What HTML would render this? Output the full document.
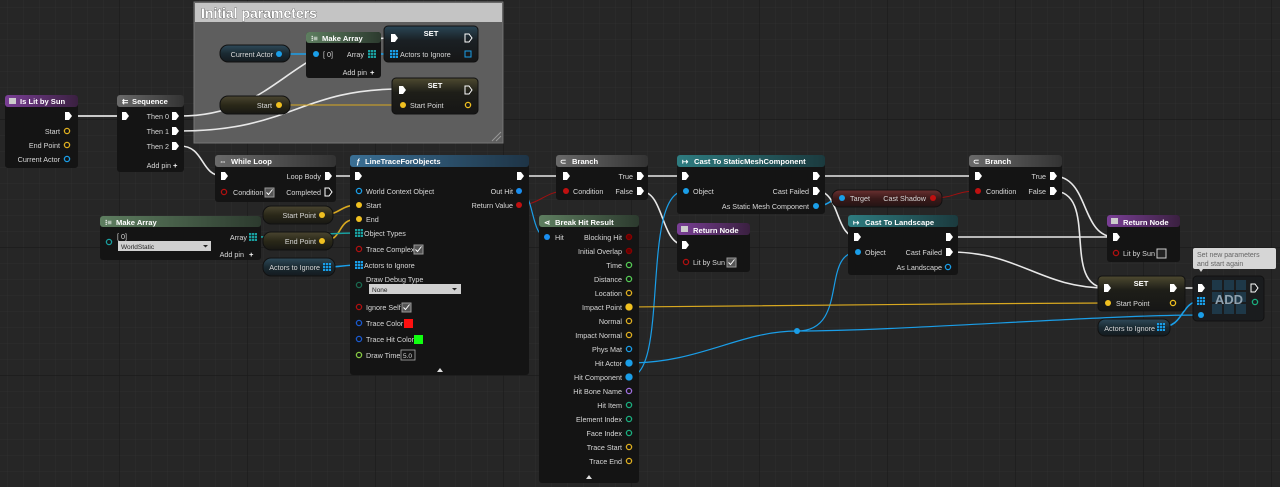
<!DOCTYPE html>
<html><head><meta charset="utf-8"><style>
html,body{margin:0;padding:0;background:#262626;overflow:hidden}
svg{display:block;font-family:"Liberation Sans",sans-serif}
.t{fill:#d8d8d8;font-size:7.2px}
.r{text-anchor:end}
.h{fill:#fff;font-size:7.6px;font-weight:bold}
.w{fill:none;stroke-width:1.6}
</style></head><body>
<svg width="1280" height="487" viewBox="0 0 1280 487" xmlns="http://www.w3.org/2000/svg">
<defs>
<pattern id="g" width="16" height="16" patternUnits="userSpaceOnUse" x="8" y="8"><path d="M16 0V16H0" fill="none" stroke="#2f2f2f" stroke-width="1"/></pattern>
<pattern id="G" width="128" height="128" patternUnits="userSpaceOnUse" x="-8" y="-8"><path d="M128 0V128H0" fill="none" stroke="#1a1a1a" stroke-width="1.2"/></pattern>
<path id="ex" d="M-3,-4h4l3,4-3,4h-4z" fill="#fff"/>
<path id="exo" d="M-3,-4h4l3,4-3,4h-4z" fill="none" stroke="#fff" stroke-width="1"/>
<g id="arr"><rect x="-4" y="-4" width="8" height="8" fill="currentColor"/><path d="M-4,-1.3h8M-4,1.3h8M-1.3,-4v8M1.3,-4v8" stroke="#111" stroke-width=".6"/></g>
<linearGradient id="purp" x1="0" x2="1"><stop offset="0" stop-color="#7a3f96"/><stop offset="1" stop-color="#3a2040"/></linearGradient>
<linearGradient id="gry" x1="0" x2="1"><stop offset="0" stop-color="#6a6a6a"/><stop offset="1" stop-color="#333"/></linearGradient>
<linearGradient id="grn" x1="0" x2="1"><stop offset="0" stop-color="#5e7e60"/><stop offset="1" stop-color="#2c3a2e"/></linearGradient>
<linearGradient id="blu" x1="0" x2="1"><stop offset="0" stop-color="#3a6f94"/><stop offset="1" stop-color="#1e3446"/></linearGradient>
<linearGradient id="tea" x1="0" x2="1"><stop offset="0" stop-color="#2e7c80"/><stop offset="1" stop-color="#1b3a3e"/></linearGradient>
<linearGradient id="pillB" x1="0" y1="0" x2="0" y2="1"><stop offset="0" stop-color="#2e4a5a"/><stop offset=".5" stop-color="#1a2a32"/><stop offset="1" stop-color="#141a1e"/></linearGradient>
<linearGradient id="pillY" x1="0" y1="0" x2="0" y2="1"><stop offset="0" stop-color="#4a4530"/><stop offset=".5" stop-color="#2a2818"/><stop offset="1" stop-color="#181814"/></linearGradient>
<linearGradient id="pillR" x1="0" y1="0" x2="0" y2="1"><stop offset="0" stop-color="#6a3030"/><stop offset=".5" stop-color="#3a1a1a"/><stop offset="1" stop-color="#221414"/></linearGradient>
<linearGradient id="setY" x1="0" y1="0" x2="0" y2="1"><stop offset="0" stop-color="#4e4a30"/><stop offset=".4" stop-color="#1e1e18"/><stop offset="1" stop-color="#161616"/></linearGradient>
<linearGradient id="setB" x1="0" y1="0" x2="0" y2="1"><stop offset="0" stop-color="#2a4656"/><stop offset=".4" stop-color="#1a2024"/><stop offset="1" stop-color="#161616"/></linearGradient>
</defs>
<rect width="1280" height="487" fill="#262626"/>
<rect width="1280" height="487" fill="url(#g)"/>
<rect width="1280" height="487" fill="url(#G)"/>

<rect x="194" y="2" width="309" height="141" fill="#5e5e5e" stroke="#777" stroke-width="1"/>
<rect x="195" y="3" width="307" height="19" fill="#c4c4c4"/>
<text x="201" y="18" style="font-size:14px;font-weight:bold;fill:#fff;stroke:#333;stroke-width:.6;paint-order:stroke">Initial parameters</text>
<path d="M492,141l9,-9M496,141l5,-5" stroke="#999" stroke-width="1"/>

<g class="w">
<path d="M72,116H123" stroke="#fff"/>
<path d="M180,116C280,116 290,38 393,38" stroke="#e8e8e8"/>
<path d="M180,131C290,131 300,89 401,89" stroke="#e8e8e8"/>
<path d="M180,146C205,146 200,176 223,176" stroke="#e8e8e8"/>
<path d="M279,54H316" stroke="#1a9ee8"/>
<path d="M372,54H393" stroke="#1a9ee8"/>
<path d="M279,105H402" stroke="#d8a820" stroke-width="1"/>
<path d="M329,176H357" stroke="#e8e8e8"/>
<path d="M322,215C340,215 340,205 358,205" stroke="#d8a820"/>
<path d="M322,241C345,241 335,219 358,219" stroke="#d8a820"/>
<path d="M253,237C300,237 320,233 358,233" stroke="#1aa0a0"/>
<path d="M327,267C340,267 345,265 358,265" stroke="#1a9ee8"/>
<path d="M521,176H565" stroke="#e8e8e8"/>
<path d="M519,205C540,205 545,191 566,191" stroke="#a01010" stroke-width="1"/>
<path d="M519,191C535,191 530,237 547,237" stroke="#1a9ee8" stroke-width="1.2"/>
<path d="M640,176H685" stroke="#e8e8e8"/>
<path d="M640,191C665,191 660,245 685,245" stroke="#e8e8e8"/>
<path d="M629,377C670,377 640,191 685,191" stroke="#1a9ee8" stroke-width="1.2"/>
<path d="M629,363C700,363 740,331 797,331C850,331 820,252 858,252" stroke="#1a9ee8" stroke-width="1.2"/>
<path d="M797,331C900,331 1100,315 1201,315" stroke="#1a9ee8" stroke-width="1.2"/>
<circle cx="797" cy="331" r="3" fill="#1a9ee8"/>
<path d="M629,307C800,307 950,303 1108,303" stroke="#d8a820" stroke-width="1.2"/>
<path d="M816,206C830,206 830,198 842,198" stroke="#1a9ee8"/>
<path d="M817,176H977" stroke="#e8e8e8"/>
<path d="M817,191C840,191 835,237 857,237" stroke="#e8e8e8"/>
<path d="M933,198C955,198 955,191 978,191" stroke="#a01010" stroke-width="1"/>
<path d="M950,237H1115" stroke="#e8e8e8"/>
<path d="M950,252C1020,252 1040,288 1107,288" stroke="#e8e8e8"/>
<path d="M1053,176C1090,176 1080,237 1115,237" stroke="#e8e8e8"/>
<path d="M1053,191C1100,191 1060,288 1107,288" stroke="#e8e8e8"/>
<path d="M1174,288H1201" stroke="#e8e8e8"/>
<path d="M1161,327C1185,327 1180,301 1201,301" stroke="#1a9ee8"/>
</g>

<rect x="5" y="95" width="73" height="73" rx="3" fill="#141414"/>
<rect x="5" y="95" width="73" height="12" rx="3" fill="url(#purp)"/>
<rect x="9" y="98" width="7" height="6" fill="#ccc"/>
<text x="20" y="104" class="h">Is Lit by Sun</text>
<use href="#ex" x="68" y="116"/>
<text x="60" y="134" class="t r">Start</text><circle cx="67" cy="131" r="2.6" fill="none" stroke="#e0b020" stroke-width="1.3"/>
<text x="60" y="148" class="t r">End Point</text><circle cx="67" cy="145" r="2.6" fill="none" stroke="#e0b020" stroke-width="1.3"/>
<text x="60" y="162" class="t r">Current Actor</text><circle cx="67" cy="159" r="2.6" fill="none" stroke="#1a9ee8" stroke-width="1.3"/>

<rect x="117" y="95" width="67" height="77" rx="3" fill="#141414"/>
<rect x="117" y="95" width="67" height="12" rx="3" fill="url(#gry)"/>
<text x="122" y="104" class="h">⇇</text>
<text x="132" y="104" class="h">Sequence</text>
<use href="#ex" x="125" y="116"/>
<text x="169" y="119" class="t r">Then 0</text><use href="#ex" x="175" y="116"/>
<text x="169" y="134" class="t r">Then 1</text><use href="#ex" x="175" y="131"/>
<text x="169" y="149" class="t r">Then 2</text><use href="#ex" x="175" y="146"/>
<text x="171" y="168" class="t r">Add pin</text><text x="173" y="168" class="h">+</text>

<rect x="220" y="45" width="70" height="17" rx="8" fill="url(#pillB)" stroke="#111"/>
<text x="273" y="57" class="t r">Current Actor</text><circle cx="279" cy="54" r="3" fill="#1a9ee8"/>
<rect x="220" y="96" width="70" height="18" rx="8" fill="url(#pillY)" stroke="#111"/>
<text x="272" y="108" class="t r">Start</text><circle cx="279" cy="105" r="3" fill="#f0c020"/>

<rect x="306" y="32" width="75" height="46" rx="3" fill="#141414"/>
<rect x="306" y="32" width="75" height="11" rx="3" fill="url(#grn)"/>
<text x="311" y="41" class="h">⁝≡</text><text x="322" y="41" class="h">Make Array</text>
<circle cx="316" cy="54" r="3" fill="#1a9ee8"/><text x="323" y="57" class="t">[ 0]</text>
<text x="364" y="57" class="t r">Array</text><use href="#arr" x="372" y="54" style="color:#1aa0a0"/>
<text x="367" y="75" class="t r">Add pin</text><text x="370" y="75" class="h">+</text>

<rect x="384" y="26" width="94" height="36" rx="4" fill="url(#setB)" stroke="#111"/>
<text x="431" y="36" class="h" text-anchor="middle">SET</text>
<use href="#ex" x="394" y="38"/><use href="#exo" x="468" y="38"/>
<use href="#arr" x="394" y="54" style="color:#1a9ee8"/><text x="400" y="57" class="t">Actors to Ignore</text>
<rect x="465" y="51" width="6" height="6" fill="none" stroke="#1a9ee8"/>

<rect x="392" y="78" width="86" height="36" rx="4" fill="url(#setY)" stroke="#111"/>
<text x="435" y="88" class="h" text-anchor="middle">SET</text>
<use href="#ex" x="402" y="90"/><use href="#exo" x="468" y="90"/>
<circle cx="403" cy="105" r="3" fill="#f0c020"/><text x="410" y="108" class="t">Start Point</text>
<circle cx="468" cy="105" r="2.6" fill="none" stroke="#f0c020" stroke-width="1.3"/>

<rect x="215" y="155" width="121" height="47" rx="3" fill="#141414"/>
<rect x="215" y="155" width="121" height="12" rx="3" fill="url(#gry)"/>
<text x="219" y="164" class="h">⇔</text><text x="231" y="164" class="h">While Loop</text>
<use href="#ex" x="224" y="176"/>
<text x="321" y="179" class="t r">Loop Body</text><use href="#ex" x="328" y="176"/>
<circle cx="224" cy="192" r="2.6" fill="none" stroke="#b01010" stroke-width="1.3"/><text x="233" y="195" class="t">Condition</text>
<rect x="265" y="188" width="9" height="9" fill="#555" stroke="#999"/><path d="M266.5,192.5l2,2 4,-5" stroke="#fff" fill="none"/>
<text x="321" y="195" class="t r">Completed</text><use href="#exo" x="328" y="192"/>

<rect x="100" y="216" width="161" height="44" rx="3" fill="#141414"/>
<rect x="100" y="216" width="161" height="11" rx="3" fill="url(#grn)"/>
<text x="105" y="225" class="h">⁝≡</text><text x="116" y="225" class="h">Make Array</text>
<text x="117" y="239" class="t">[ 0]</text>
<circle cx="109" cy="242" r="2.6" fill="none" stroke="#1aa0a0" stroke-width="1.3"/>
<rect x="118" y="241" width="93" height="10" fill="#d0d0d0"/><text x="121" y="249" style="font-size:6.5px;fill:#222">WorldStatic</text>
<path d="M203,245h5l-2.5,2.5z" fill="#222"/>
<text x="247" y="240" class="t r">Array</text><use href="#arr" x="253" y="237" style="color:#1aa0a0"/>
<text x="244" y="257" class="t r">Add pin</text><text x="249" y="257" class="h">+</text>

<rect x="263" y="206" width="70" height="18" rx="8" fill="url(#pillY)" stroke="#111"/>
<text x="316" y="218" class="t r">Start Point</text><circle cx="322" cy="215" r="3" fill="#f0c020"/>
<rect x="263" y="232" width="70" height="18" rx="8" fill="url(#pillY)" stroke="#111"/>
<text x="316" y="244" class="t r">End Point</text><circle cx="322" cy="241" r="3" fill="#f0c020"/>
<rect x="263" y="258" width="72" height="18" rx="8" fill="url(#pillB)" stroke="#111"/>
<text x="320" y="270" class="t r">Actors to Ignore</text><use href="#arr" x="327" y="267" style="color:#1a9ee8"/>

<rect x="350" y="155" width="179" height="220" rx="3" fill="#141414"/>
<rect x="350" y="155" width="179" height="12" rx="3" fill="url(#blu)"/>
<text x="356" y="164" class="h" style="font-style:italic">ƒ</text><text x="365" y="164" class="h">LineTraceForObjects</text>
<use href="#ex" x="358" y="176"/><use href="#ex" x="520" y="176"/>
<circle cx="359" cy="191" r="2.6" fill="none" stroke="#1a9ee8" stroke-width="1.3"/><text x="366" y="194" class="t">World Context Object</text>
<circle cx="359" cy="205" r="3" fill="#f0c020"/><text x="366" y="208" class="t">Start</text>
<circle cx="359" cy="219" r="3" fill="#f0c020"/><text x="366" y="222" class="t">End</text>
<use href="#arr" x="359" y="233" style="color:#1aa0a0"/><text x="364" y="236" class="t">Object Types</text>
<circle cx="359" cy="249" r="2.6" fill="none" stroke="#b01010" stroke-width="1.3"/><text x="366" y="252" class="t">Trace Complex</text>
<rect x="414" y="245" width="9" height="9" fill="#555" stroke="#999"/><path d="M415.5,249.5l2,2 4,-5" stroke="#fff" fill="none"/>
<use href="#arr" x="359" y="265" style="color:#1a9ee8"/><text x="364" y="268" class="t">Actors to Ignore</text>
<text x="366" y="282" class="t">Draw Debug Type</text>
<circle cx="359" cy="285" r="2.6" fill="none" stroke="#1a6a50" stroke-width="1.3"/>
<rect x="369" y="284" width="92" height="10" fill="#d0d0d0"/><text x="372" y="292" style="font-size:6.5px;fill:#222">None</text>
<path d="M452,288h5l-2.5,2.5z" fill="#222"/>
<circle cx="359" cy="307" r="2.6" fill="none" stroke="#b01010" stroke-width="1.3"/><text x="366" y="310" class="t">Ignore Self</text>
<rect x="402" y="303" width="9" height="9" fill="#555" stroke="#999"/><path d="M403.5,307.5l2,2 4,-5" stroke="#fff" fill="none"/>
<circle cx="359" cy="323" r="2.6" fill="none" stroke="#1a5ad0" stroke-width="1.3"/><text x="366" y="326" class="t">Trace Color</text>
<rect x="404" y="319" width="9" height="9" fill="#ff1010"/>
<circle cx="359" cy="339" r="2.6" fill="none" stroke="#1a5ad0" stroke-width="1.3"/><text x="366" y="342" class="t">Trace Hit Color</text>
<rect x="414" y="335" width="9" height="9" fill="#10ff10"/>
<circle cx="359" cy="355" r="2.6" fill="none" stroke="#8c4" stroke-width="1.3"/><text x="366" y="358" class="t">Draw Time</text>
<rect x="401" y="350" width="14" height="10" fill="#141414" stroke="#aaa" stroke-width=".8"/><text x="403" y="358" class="t" style="font-size:6.5px">5.0</text>
<path d="M437,372h6l-3,-4z" fill="#ddd"/>
<text x="513" y="194" class="t r">Out Hit</text><circle cx="519" cy="191" r="3" fill="#1a8ef0"/>
<text x="513" y="208" class="t r">Return Value</text><circle cx="519" cy="205" r="3" fill="#c01010"/>

<rect x="556" y="155" width="92" height="45" rx="3" fill="#141414"/>
<rect x="556" y="155" width="92" height="12" rx="3" fill="url(#gry)"/>
<text x="560" y="164" class="h">⊂</text><text x="572" y="164" class="h">Branch</text>
<use href="#ex" x="566" y="176"/>
<circle cx="566" cy="191" r="3" fill="#c01010"/><text x="573" y="194" class="t">Condition</text>
<text x="633" y="179" class="t r">True</text><use href="#ex" x="640" y="176"/>
<text x="633" y="194" class="t r">False</text><use href="#ex" x="640" y="191"/>

<rect x="539" y="215" width="100" height="268" rx="3" fill="#141414"/>
<rect x="539" y="215" width="100" height="12" rx="3" fill="url(#grn)"/>
<text x="544" y="225" class="h">⋖</text><text x="555" y="225" class="h">Break Hit Result</text>
<circle cx="547" cy="237" r="3" fill="#1a8ef0"/><text x="555" y="240" class="t">Hit</text>
<g class="t r">
<text x="622" y="240">Blocking Hit</text><text x="622" y="254">Initial Overlap</text><text x="622" y="268">Time</text><text x="622" y="282">Distance</text><text x="622" y="296">Location</text><text x="622" y="310">Impact Point</text><text x="622" y="324">Normal</text><text x="622" y="338">Impact Normal</text><text x="622" y="352">Phys Mat</text><text x="622" y="366">Hit Actor</text><text x="622" y="380">Hit Component</text><text x="622" y="394">Hit Bone Name</text><text x="622" y="408">Hit Item</text><text x="622" y="422">Element Index</text><text x="622" y="436">Face Index</text><text x="622" y="450">Trace Start</text><text x="622" y="464">Trace End</text>
</g>
<g fill="none" stroke-width="1.3">
<circle cx="629" cy="237" r="2.6" fill="#600" stroke="#800"/><circle cx="629" cy="251" r="2.6" fill="#600" stroke="#800"/>
<circle cx="629" cy="265" r="2.6" stroke="#5c5"/><circle cx="629" cy="279" r="2.6" stroke="#5c5"/>
<circle cx="629" cy="293" r="2.6" stroke="#e0b020"/><circle cx="629" cy="307" r="3" fill="#f0c020" stroke="#f0c020"/>
<circle cx="629" cy="321" r="2.6" stroke="#e0b020"/><circle cx="629" cy="335" r="2.6" stroke="#e0b020"/>
<circle cx="629" cy="349" r="2.6" stroke="#1a9ee8"/><circle cx="629" cy="363" r="3" fill="#1a9ee8" stroke="#1a9ee8"/>
<circle cx="629" cy="377" r="3" fill="#1a9ee8" stroke="#1a9ee8"/><circle cx="629" cy="391" r="2.6" stroke="#a070e0"/>
<circle cx="629" cy="405" r="2.6" stroke="#1ab080"/><circle cx="629" cy="419" r="2.6" stroke="#1ab080"/>
<circle cx="629" cy="433" r="2.6" stroke="#1ab080"/><circle cx="629" cy="447" r="2.6" stroke="#e0b020"/>
<circle cx="629" cy="461" r="2.6" stroke="#e0b020"/>
</g>
<path d="M586,479h6l-3,-4z" fill="#ddd"/>

<rect x="677" y="155" width="148" height="59" rx="3" fill="#141414"/>
<rect x="677" y="155" width="148" height="12" rx="3" fill="url(#tea)"/>
<text x="682" y="164" class="h">↦</text><text x="694" y="164" class="h">Cast To StaticMeshComponent</text>
<use href="#ex" x="685" y="176"/><use href="#ex" x="816" y="176"/>
<circle cx="686" cy="191" r="3" fill="#1a9ee8"/><text x="693" y="194" class="t">Object</text>
<text x="809" y="194" class="t r">Cast Failed</text><use href="#ex" x="816" y="191"/>
<text x="809" y="209" class="t r">As Static Mesh Component</text><circle cx="816" cy="206" r="3" fill="#1a9ee8"/>

<rect x="677" y="223" width="73" height="49" rx="3" fill="#141414"/>
<rect x="677" y="223" width="73" height="12" rx="3" fill="url(#purp)"/>
<rect x="681" y="226" width="7" height="6" fill="#ccc"/><text x="693" y="233" class="h">Return Node</text>
<use href="#ex" x="685" y="245"/>
<circle cx="686" cy="262" r="2.6" fill="none" stroke="#b01010" stroke-width="1.3"/><text x="693" y="265" class="t">Lit by Sun</text>
<rect x="727" y="258" width="9" height="9" fill="#555" stroke="#999"/><path d="M728.5,262.5l2,2 4,-5" stroke="#fff" fill="none"/>

<rect x="832" y="190" width="110" height="17" rx="7" fill="url(#pillR)" stroke="#111"/>
<circle cx="842" cy="198" r="3" fill="#1a9ee8"/><text x="850" y="201" class="t">Target</text>
<text x="926" y="201" class="t r">Cast Shadow</text><circle cx="933" cy="198" r="3" fill="#c01010"/>

<rect x="848" y="215" width="110" height="60" rx="3" fill="#141414"/>
<rect x="848" y="215" width="110" height="12" rx="3" fill="url(#tea)"/>
<text x="853" y="225" class="h">↦</text><text x="865" y="225" class="h">Cast To Landscape</text>
<use href="#ex" x="857" y="237"/><use href="#ex" x="949" y="237"/>
<circle cx="858" cy="252" r="3" fill="#1a9ee8"/><text x="865" y="255" class="t">Object</text>
<text x="942" y="255" class="t r">Cast Failed</text><use href="#ex" x="949" y="252"/>
<text x="942" y="270" class="t r">As Landscape</text><circle cx="948" cy="267" r="2.6" fill="none" stroke="#1a9ee8" stroke-width="1.3"/>

<rect x="969" y="155" width="93" height="45" rx="3" fill="#141414"/>
<rect x="969" y="155" width="93" height="12" rx="3" fill="url(#gry)"/>
<text x="973" y="164" class="h">⊂</text><text x="985" y="164" class="h">Branch</text>
<use href="#ex" x="978" y="176"/>
<circle cx="978" cy="191" r="3" fill="#c01010"/><text x="986" y="194" class="t">Condition</text>
<text x="1046" y="179" class="t r">True</text><use href="#ex" x="1053" y="176"/>
<text x="1046" y="194" class="t r">False</text><use href="#ex" x="1053" y="191"/>

<rect x="1107" y="215" width="73" height="47" rx="3" fill="#141414"/>
<rect x="1107" y="215" width="73" height="12" rx="3" fill="url(#purp)"/>
<rect x="1111" y="218" width="7" height="6" fill="#ccc"/><text x="1123" y="225" class="h">Return Node</text>
<use href="#ex" x="1116" y="237"/>
<circle cx="1116" cy="253" r="2.6" fill="none" stroke="#b01010" stroke-width="1.3"/><text x="1123" y="256" class="t">Lit by Sun</text>
<rect x="1157" y="249" width="9" height="9" fill="#222" stroke="#ccc"/>

<rect x="1193" y="248" width="83" height="21" rx="2" fill="#d6d6d6"/>
<path d="M1199,269l2,3 2,-3z" fill="#d6d6d6"/>
<text x="1197" y="257" style="font-size:7px;fill:#666">Set new parameters</text>
<text x="1197" y="266" style="font-size:7px;fill:#666">and start again</text>

<rect x="1098" y="276" width="87" height="35" rx="4" fill="url(#setY)" stroke="#111"/>
<text x="1141" y="286" class="h" text-anchor="middle">SET</text>
<use href="#ex" x="1107" y="288"/><use href="#ex" x="1173" y="288"/>
<circle cx="1108" cy="303" r="3" fill="#f0c020"/><text x="1116" y="306" class="t">Start Point</text>
<circle cx="1173" cy="303" r="2.6" fill="none" stroke="#f0c020" stroke-width="1.3"/>

<rect x="1193" y="276" width="71" height="45" rx="4" fill="#1a1c1e" stroke="#111"/>
<g fill="#1e3848">
<rect x="1212" y="280" width="10" height="10"/><rect x="1224" y="280" width="10" height="10"/><rect x="1236" y="280" width="10" height="10"/>
<rect x="1212" y="292" width="10" height="10"/><rect x="1224" y="292" width="10" height="10"/><rect x="1236" y="292" width="10" height="10"/>
<rect x="1212" y="304" width="10" height="10"/><rect x="1224" y="304" width="10" height="10"/><rect x="1236" y="304" width="10" height="10"/>
</g>
<text x="1229" y="304" text-anchor="middle" style="font-size:13px;font-weight:bold;fill:#8fa2b0">ADD</text>
<use href="#ex" x="1201" y="288"/><use href="#exo" x="1254" y="288"/>
<use href="#arr" x="1201" y="301" style="color:#1a9ee8"/>
<circle cx="1201" cy="315" r="3" fill="#1a9ee8"/>
<circle cx="1255" cy="302" r="2.6" fill="none" stroke="#1ab080" stroke-width="1.3"/>

<rect x="1098" y="319" width="72" height="17" rx="7" fill="url(#pillB)" stroke="#111"/>
<text x="1155" y="331" class="t r">Actors to Ignore</text><use href="#arr" x="1161" y="327" style="color:#1a9ee8"/>
</svg>
</body></html>
